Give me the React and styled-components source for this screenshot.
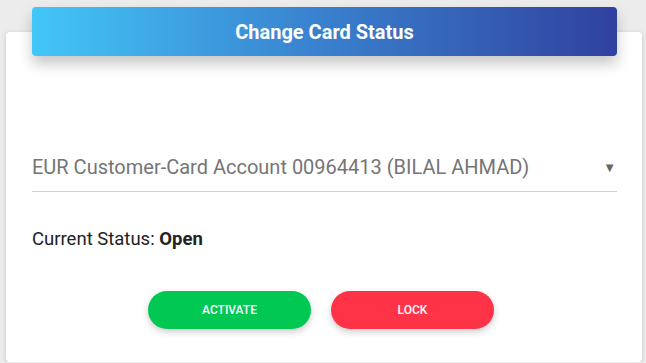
import styled, { createGlobalStyle } from "styled-components";

const GlobalStyle = createGlobalStyle`
  * { box-sizing: border-box; }
  body {
    margin: 0;
    background: #ececec;
    font-family: Roboto, "Liberation Sans", sans-serif;
  }
`;

const Page = styled.div`
  padding: 32px 4px 0 6px;
`;

const Card = styled.div`
  display: flow-root;
  background: #fff;
  border-radius: 4px;
  box-shadow: 0 1px 4px rgba(0, 0, 0, 0.18);
  padding: 0 25px 33px 26px;
`;

const Header = styled.div`
  margin-top: -25px;
  height: 49px;
  border-radius: 4px;
  background: linear-gradient(90deg, #43c6f8 0%, #3a86d2 45%, #3041a0 100%);
  box-shadow: 0 8px 14px rgba(0, 0, 0, 0.22);
  display: flex;
  align-items: center;
  justify-content: center;
  color: #fff;
  font-size: 20px;
  font-weight: 700;
`;

const SelectRow = styled.div`
  margin-top: 91px;
  padding: 8px 0 12px;
  border-bottom: 1px solid #cfd3d8;
  display: flex;
  align-items: center;
  justify-content: space-between;
`;

const SelectText = styled.span`
  font-size: 20px;
  line-height: 24px;
  color: #757575;
`;

const Arrow = styled.span`
  font-size: 13px;
  color: #666;
  margin-right: 1px;
`;

const Status = styled.div`
  margin-top: 37px;
  font-size: 18.5px;
  line-height: 20px;
  color: #222;

  b {
    font-weight: 700;
  }
`;

const Actions = styled.div`
  margin-top: 42px;
  display: flex;
  justify-content: center;
  gap: 20px;
  padding-right: 7px;
`;

const Button = styled.button`
  width: 163px;
  height: 38px;
  border: none;
  border-radius: 19px;
  background: ${(p) => p.$color};
  color: #fff;
  font-family: Roboto, "Liberation Sans", sans-serif;
  font-size: 12px;
  font-weight: 500;
  text-transform: uppercase;
  box-shadow: 0 3px 7px rgba(0, 0, 0, 0.2);
  cursor: pointer;
`;

export default function App() {
  return (
    <>
      <GlobalStyle />
      <Page>
        <Card>
          <Header>Change Card Status</Header>
          <SelectRow>
            <SelectText>EUR Customer-Card Account 00964413 (BILAL AHMAD)</SelectText>
            <Arrow>▼</Arrow>
          </SelectRow>
          <Status>
            Current Status: <b>Open</b>
          </Status>
          <Actions>
            <Button $color="#00c853">Activate</Button>
            <Button $color="#ff3348">Lock</Button>
          </Actions>
        </Card>
      </Page>
    </>
  );
}
